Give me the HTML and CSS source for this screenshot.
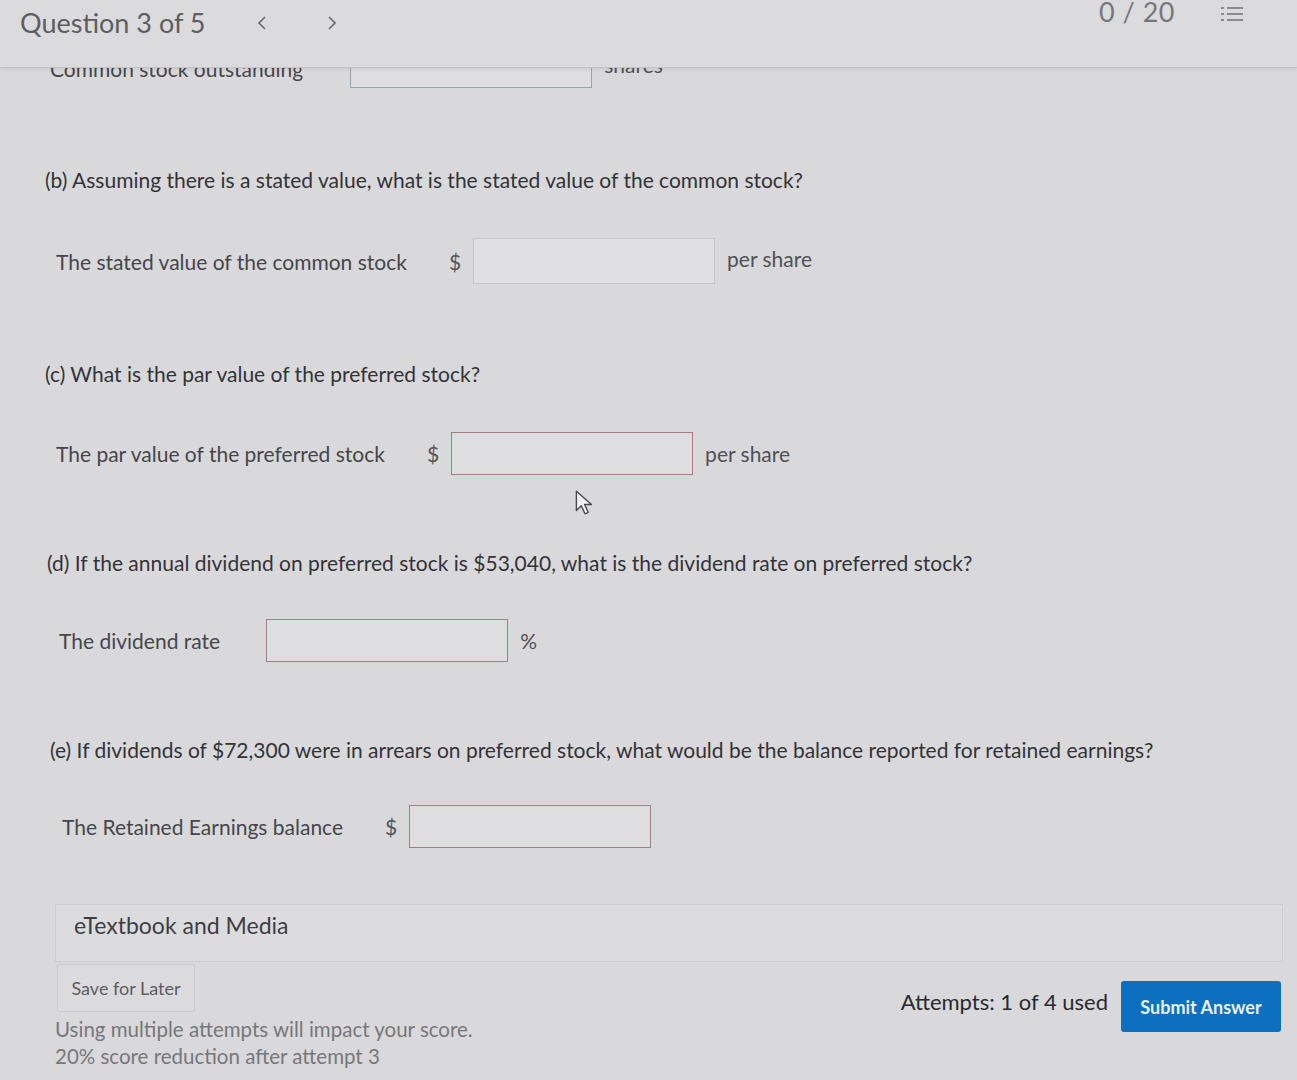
FILE: index.html
```html
<!DOCTYPE html>
<html lang="en">
<head>
<meta charset="utf-8">
<title>Question 3 of 5</title>
<link rel="stylesheet" href="styles.css">
</head>
<body>
<header class="topbar">
  <div class="topbar-left">
    <span class="q-title">Question 3 of 5</span>
    <svg class="nav-arrow" width="12" height="16" viewBox="0 0 12 16">
      <path d="M9 2 L3 8 L9 14" fill="none" stroke="#6a6a6e" stroke-width="1.6"/>
    </svg>
    <svg class="nav-arrow nav-next" width="12" height="16" viewBox="0 0 12 16">
      <path d="M3 2 L9 8 L3 14" fill="none" stroke="#6a6a6e" stroke-width="1.6"/>
    </svg>
  </div>
  <div class="topbar-right">
    <span class="score">0 / 20</span>
    <svg class="menu-icon" width="22" height="16" viewBox="0 0 22 16">
      <rect x="0" y="1" width="3" height="2" fill="#8a8a8e"/>
      <rect x="6" y="1" width="16" height="2" fill="#8a8a8e"/>
      <rect x="0" y="7" width="3" height="2" fill="#8a8a8e"/>
      <rect x="6" y="7" width="16" height="2" fill="#8a8a8e"/>
      <rect x="0" y="13" width="3" height="2" fill="#8a8a8e"/>
      <rect x="6" y="13" width="16" height="2" fill="#8a8a8e"/>
    </svg>
  </div>
</header>

<main class="content">
  <div class="answer-row cut-row">
    <span class="label">Common stock outstanding</span>
    <span class="field field-blue"></span>
    <span class="unit">shares</span>
  </div>

  <p class="question q-b">(b) Assuming there is a stated value, what is the stated value of the common stock?</p>
  <div class="answer-row row-b">
    <span class="label">The stated value of the common stock</span>
    <span class="currency">$</span>
    <span class="field field-light"></span>
    <span class="unit unit-up">per share</span>
  </div>

  <p class="question q-c">(c) What is the par value of the preferred stock?</p>
  <div class="answer-row row-c">
    <span class="label">The par value of the preferred stock</span>
    <span class="currency">$</span>
    <span class="field field-red"></span>
    <span class="unit">per share</span>
  </div>

  <p class="question q-d">(d) If the annual dividend on preferred stock is $53,040, what is the dividend rate on preferred stock?</p>
  <div class="answer-row row-d">
    <span class="label">The dividend rate</span>
    <span class="field field-red"></span>
    <span class="unit">%</span>
  </div>

  <p class="question q-e">(e) If dividends of $72,300 were in arrears on preferred stock, what would be the balance reported for retained earnings?</p>
  <div class="answer-row row-e">
    <span class="label">The Retained Earnings balance</span>
    <span class="currency">$</span>
    <span class="field field-red"></span>
  </div>

  <div class="media-panel">eTextbook and Media</div>

  <div class="footer-row">
    <div class="footer-left">
      <button class="btn-save" type="button">Save for Later</button>
      <p class="note">Using multiple attempts will impact your score.<br>20% score reduction after attempt 3</p>
    </div>
    <div class="footer-right">
      <span class="attempts">Attempts: 1 of 4 used</span>
      <button class="btn-submit" type="button">Submit Answer</button>
    </div>
  </div>
</main>

<svg class="cursor" width="22" height="28" viewBox="0 0 20 26">
  <path d="M2 2 L2 20 L6.5 15.5 L10 23 L13 21.6 L9.6 14.4 L16 14.4 Z" fill="#f2f2f2" stroke="#4a4a4e" stroke-width="1.3" stroke-linejoin="round"/>
</svg>
</body>
</html>
```

FILE: styles.css
```css
html, body {
  margin: 0;
  padding: 0;
}

body {
  width: 1297px;
  height: 1080px;
  overflow: hidden;
  background: #d9d9dc;
  font-family: Lato, "Open Sans", "Liberation Sans", sans-serif;
  color: #3b3b3e;
  position: relative;
}

.topbar {
  position: absolute;
  top: 0;
  left: 0;
  right: 0;
  height: 67px;
  background: #dbdbde;
  border-bottom: 1px solid #c4c4c8;
  box-shadow: 0 2px 3px rgba(0,0,0,0.06);
  display: flex;
  justify-content: space-between;
  align-items: flex-start;
  z-index: 5;
}

.topbar-left {
  display: flex;
  align-items: center;
  padding-left: 20px;
  height: 44px;
}

.q-title {
  font-size: 27px;
  color: #5d5d61;
}

.nav-arrow {
  margin-left: 51px;
  margin-top: 2px;
}

.nav-next {
  margin-left: 58px;
}

.topbar-right {
  display: flex;
  align-items: center;
  gap: 46px;
  padding-right: 54px;
  margin-top: -4px;
}

.score {
  font-size: 27px;
  line-height: 32px;
  color: #77777b;
  letter-spacing: 0.5px;
}

.menu-icon {
  margin-top: 4px;
}

.content {
  padding-top: 48px;
  padding-left: 45px;
  padding-right: 14px;
}

.answer-row {
  display: flex;
  align-items: center;
  padding-left: 11px;
  font-size: 21px;
  color: #46464a;
}

.label {
  margin-right: 42px;
}

.currency {
  margin-right: 12px;
  color: #55555a;
}

.field {
  display: block;
  width: 242px;
  height: 43px;
  border: 1px solid #c9c9cc;
  background: #dedee1;
  box-sizing: border-box;
}

.field-light {
  border-color: #c6c6c9;
  background: #e0e0e3;
  height: 46px;
}

.field-red {
  border-color: #a57e82;
  background: #dedee1;
}

.field-blue {
  border-color: #8fa6bd;
  height: 40px;
}

.unit {
  margin-left: 12px;
  color: #505055;
}

.unit-up {
  align-self: flex-start;
  margin-top: 8px;
}

.cut-row {
  padding-left: 5px;
  align-items: flex-start;
}

.cut-row .label {
  margin-top: 8px;
  margin-right: 47px;
}

.cut-row .unit {
  margin-top: 4px;
}

.question {
  margin: 0;
  font-size: 21px;
  line-height: 25px;
  color: #333337;
}

.q-b { margin-top: 79px; padding-left: 0; }
.row-b { margin-top: 46px; }
.q-c { margin-top: 77px; }
.row-c { margin-top: 46px; }
.q-d { margin-top: 75px; padding-left: 2px; }
.row-d { margin-top: 44px; padding-left: 14px; }
.row-d .label { margin-right: 46px; }
.q-e { margin-top: 75px; padding-left: 5px; }
.row-e { margin-top: 43px; padding-left: 17px; }

.media-panel {
  margin-top: 56px;
  margin-left: 10px;
  height: 58px;
  box-sizing: border-box;
  padding: 5px 18px 0;
  background: #dcdcdf;
  border: 1px solid #cdcdd0;
  font-size: 23px;
  line-height: 30px;
  color: #3e3e42;
}

.footer-row {
  display: flex;
  justify-content: space-between;
  align-items: flex-start;
  margin-top: 2px;
  margin-left: 12px;
}

.btn-save {
  display: block;
  width: 138px;
  height: 48px;
  background: #dbdbde;
  border: 1px solid #cbcbce;
  border-radius: 2px;
  font-family: Lato, "Open Sans", "Liberation Sans", sans-serif;
  font-size: 18px;
  color: #5c5c60;
  padding: 0;
}

.note {
  margin: 4px 0 0 -2px;
  font-size: 20.5px;
  line-height: 27px;
  color: #77777b;
}

.footer-right {
  display: flex;
  align-items: center;
  gap: 13px;
  margin-top: 17px;
  margin-right: 2px;
}

.attempts {
  font-size: 22px;
  color: #2a2a2e;
  margin-bottom: 10px;
}

.btn-submit {
  width: 160px;
  height: 51px;
  background: #0c6fc0;
  border: none;
  border-radius: 3px;
  color: #e8f0fb;
  font-family: Lato, "Open Sans", "Liberation Sans", sans-serif;
  font-weight: bold;
  font-size: 18px;
  padding: 0;
}

.cursor {
  position: absolute;
  left: 574px;
  top: 489px;
}
```
